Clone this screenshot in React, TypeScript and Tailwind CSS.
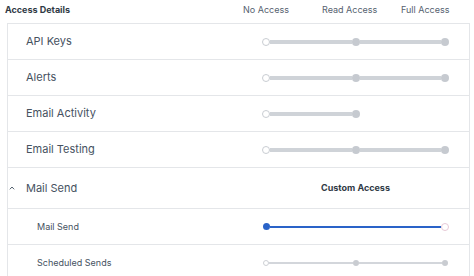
import React from 'react';

type Level = 'none' | 'read' | 'full';

const Knob = ({ filled }: { filled?: boolean }) => (
  <div
    className={
      filled
        ? 'h-[8px] w-[8px] shrink-0 rounded-full bg-[#c6cad0]'
        : 'h-[8px] w-[8px] shrink-0 rounded-full border border-[#c9cdd2] bg-white'
    }
  />
);

const Segment = ({ on }: { on: boolean }) => (
  <div className={on ? 'h-[4px] flex-1 bg-[#cfd3d8]' : 'h-[4px] flex-1'} />
);

function AccessSlider({ level }: { level: Level }) {
  return (
    <div className="flex w-[187px] items-center">
      <Knob />
      <Segment on={level !== 'none'} />
      {level === 'full' || level === 'read' ? <Knob filled /> : <div className="w-[8px]" />}
      <Segment on={level === 'full'} />
      {level === 'full' ? <Knob filled /> : <div className="w-[8px]" />}
    </div>
  );
}

function Row({ label, level }: { label: string; level: Level }) {
  return (
    <div className="flex h-[36px] items-center border-b border-[#e4e6e9]">
      <div className="w-[254px] pl-[18px] text-[11px] text-[#46525f]">{label}</div>
      <AccessSlider level={level} />
    </div>
  );
}

export default function App() {
  return (
    <div className="h-[276px] w-[474px] overflow-hidden bg-white font-['Inter',sans-serif]">
      <div className="grid h-[23px] grid-cols-[238px_79px_79px_1fr] pl-[5px] pt-[3px] text-[9px] text-[#56626f]">
        <span className="font-bold text-[#2f3a45]">Access Details</span>
        <span>No Access</span>
        <span>Read Access</span>
        <span>Full Access</span>
      </div>
      <div className="ml-[7px] w-[463px] border border-b-0 border-[#e4e6e9]">
        <Row label="API Keys" level="full" />
        <Row label="Alerts" level="full" />
        <Row label="Email Activity" level="read" />
        <Row label="Email Testing" level="full" />
        <div className="flex h-[41px] items-center border-b border-[#e4e6e9]">
          <div className="flex w-[254px] items-center">
            <svg width="6" height="4" viewBox="0 0 6 4" className="ml-[1px] mr-[11px]">
              <path d="M0.8 3.3 L3 1 L5.2 3.3" fill="none" stroke="#56626f" strokeWidth="1" />
            </svg>
            <span className="text-[11px] text-[#46525f]">Mail Send</span>
          </div>
          <div className="w-[187px] text-center text-[9px] font-bold text-[#2f3a45]">Custom Access</div>
        </div>
        <div className="flex h-[36px] items-center border-b border-[#e4e6e9]">
          <div className="w-[254px] pl-[29px] text-[9px] text-[#46525f]">Mail Send</div>
          <div className="flex w-[187px] items-center">
            <div className="mx-[0.5px] h-[7px] w-[7px] shrink-0 rounded-full bg-[#2a63c8]" />
            <div className="h-[2px] flex-1 bg-[#2a63c8]" />
            <div className="h-[8px] w-[8px] shrink-0 rounded-full border border-[#e7c9d6] bg-white" />
          </div>
        </div>
        <div className="flex h-[36px] items-center">
          <div className="w-[254px] pl-[29px] text-[9px] text-[#46525f]">Scheduled Sends</div>
          <div className="flex w-[187px] items-center px-[1px]">
            <div className="h-[6px] w-[6px] shrink-0 rounded-full border border-[#cdd0d5] bg-white" />
            <div className="h-[2px] flex-1 bg-[#d3d6db]" />
            <div className="h-[6px] w-[6px] shrink-0 rounded-full bg-[#c9ccd1]" />
            <div className="h-[2px] flex-1 bg-[#d3d6db]" />
            <div className="h-[6px] w-[6px] shrink-0 rounded-full bg-[#c9ccd1]" />
          </div>
        </div>
      </div>
    </div>
  );
}
